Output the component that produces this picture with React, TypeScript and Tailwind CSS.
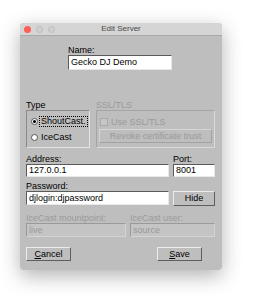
import React from "react";

const font = { fontFamily: '"Liberation Sans", Arial, sans-serif' };

function Input({ value, w, h = "h-[13px]", disabled = false }: { value: string; w: string; h?: string; disabled?: boolean }) {
  return (
    <div
      className={`${w} ${h} flex items-center px-[2px] text-[9px] leading-none border-t border-l border-b border-r ${
        disabled
          ? "bg-[#c4c4c4] border-t-[#9a9a9a] border-l-[#9a9a9a] border-b-[#d4d4d4] border-r-[#d4d4d4] text-[#9a9a9a]"
          : "bg-white border-t-[#5a5a5a] border-l-[#5a5a5a] border-b-[#e8e8e8] border-r-[#e8e8e8] text-black"
      }`}
    >
      {value}
    </div>
  );
}

function Button({ children, w, h = "h-[14px]", disabled = false }: { children: React.ReactNode; w: string; h?: string; disabled?: boolean }) {
  return (
    <div
      className={`${w} ${h} flex items-center justify-center text-[9px] leading-none border ${
        disabled
          ? "border-t-[#d6d6d6] border-l-[#d6d6d6] border-b-[#a2a2a2] border-r-[#a2a2a2] text-[#9a9a9a]"
          : "border-t-[#ececec] border-l-[#ececec] border-b-[#5e5e5e] border-r-[#5e5e5e] text-black"
      }`}
    >
      {children}
    </div>
  );
}

export default function App() {
  return (
    <div className="w-[256px] h-[300px] bg-white pt-[23px] pl-[20px]" style={font}>
      <div className="w-[202px] h-[247px] rounded-[4px] overflow-hidden shadow-[0_6px_20px_rgba(0,0,0,0.3)] bg-[#bebebe] flex flex-col">
        {/* Title bar */}
        <div className="h-[13px] bg-[#d5d5d5] border-b border-[#a9a9a9] flex items-center relative">
          <div className="flex gap-[5px] pl-[4px]">
            <div className="w-[7px] h-[7px] rounded-full bg-[#fc5f57]" />
            <div className="w-[7px] h-[7px] rounded-full bg-[#cfcfcf] border border-[#bcbcbc]" />
            <div className="w-[7px] h-[7px] rounded-full bg-[#cfcfcf] border border-[#bcbcbc]" />
          </div>
          <div className="absolute inset-0 flex items-center justify-center text-[8px] text-[#4a4a4a]">Edit Server</div>
        </div>

        {/* Body */}
        <div className="flex flex-col pl-[6px] pr-[7px]">
          {/* Name */}
          <div className="ml-[42px] mt-[9px] flex flex-col">
            <div className="h-[10px] text-[9px] leading-[10px] text-black">Name:</div>
            <Input value="Gecko DJ Demo" w="w-[104px]" h="h-[15px]" />
          </div>

          {/* Type / SSL */}
          <div className="mt-[30px] flex gap-[6px]">
            <div className="flex flex-col w-[64px]">
              <div className="h-[10px] text-[9px] leading-[10px] text-black">Type</div>
              <div className="h-[38px] border border-t-[#8a8a8a] border-l-[#8a8a8a] border-b-[#e4e4e4] border-r-[#e4e4e4] flex flex-col pl-[4px] pt-[5px] gap-[5px]">
                <div className="flex items-center h-[11px]">
                  <div className="w-[7px] h-[7px] rounded-full bg-white border border-[#555] flex items-center justify-center">
                    <div className="w-[3px] h-[3px] rounded-full bg-black" />
                  </div>
                  <div className="ml-[1px] px-[1px] h-[11px] flex items-center border border-dotted border-black text-[9px] leading-none text-black">
                    ShoutCast.
                  </div>
                </div>
                <div className="flex items-center h-[11px]">
                  <div className="w-[7px] h-[7px] rounded-full bg-white border border-[#555]" />
                  <div className="ml-[3px] text-[9px] leading-none text-black">IceCast</div>
                </div>
              </div>
            </div>
            <div className="flex flex-col w-[119px]">
              <div className="h-[10px] text-[9px] leading-[10px] text-[#9a9a9a]">SSL/TLS</div>
              <div className="h-[38px] border border-t-[#a4a4a4] border-l-[#a4a4a4] border-b-[#dadada] border-r-[#dadada] flex flex-col pl-[2px] pr-[2px] pt-[6px]">
                <div className="flex items-center h-[10px] pl-[1px]">
                  <div className="w-[8px] h-[8px] bg-[#c6c6c6] border border-[#a8a8a8]" />
                  <div className="ml-[3px] text-[9px] leading-none text-[#9a9a9a]">Use SSL/TLS</div>
                </div>
                <div className="mt-[2px]">
                  <Button w="w-[113px]" disabled>
                    Revoke certificate trust
                  </Button>
                </div>
              </div>
            </div>
          </div>

          {/* Address / Port */}
          <div className="mt-[6px] flex gap-[4px]">
            <div className="flex flex-col">
              <div className="h-[10px] text-[9px] leading-[10px] text-black">Address:</div>
              <Input value="127.0.0.1" w="w-[143px]" />
            </div>
            <div className="flex flex-col">
              <div className="h-[10px] text-[9px] leading-[10px] text-black">Port:</div>
              <Input value="8001" w="w-[42px]" />
            </div>
          </div>

          {/* Password */}
          <div className="mt-[4px] flex flex-col">
            <div className="h-[10px] text-[9px] leading-[10px] text-black">Password:</div>
            <div className="flex gap-[4px] items-start">
              <Input value="djlogin:djpassword" w="w-[143px]" h="h-[14px]" />
              <Button w="w-[42px]" h="h-[15px]">
                Hide
              </Button>
            </div>
          </div>

          {/* IceCast */}
          <div className="mt-[7px] flex gap-[4px]">
            <div className="flex flex-col">
              <div className="h-[10px] text-[9px] leading-[10px] text-[#9a9a9a]">IceCast mountpoint:</div>
              <Input value="live" w="w-[100px]" h="h-[14px]" disabled />
            </div>
            <div className="flex flex-col">
              <div className="h-[10px] text-[9px] leading-[10px] text-[#9a9a9a]">IceCast user:</div>
              <Input value="source" w="w-[85px]" h="h-[14px]" disabled />
            </div>
          </div>

          {/* Buttons */}
          <div className="mt-[10px] flex justify-between pr-[13px]">
            <Button w="w-[45px]">
              <span><span className="underline">C</span>ancel</span>
            </Button>
            <Button w="w-[45px]">
              <span><span className="underline">S</span>ave</span>
            </Button>
          </div>
        </div>
      </div>
    </div>
  );
}
